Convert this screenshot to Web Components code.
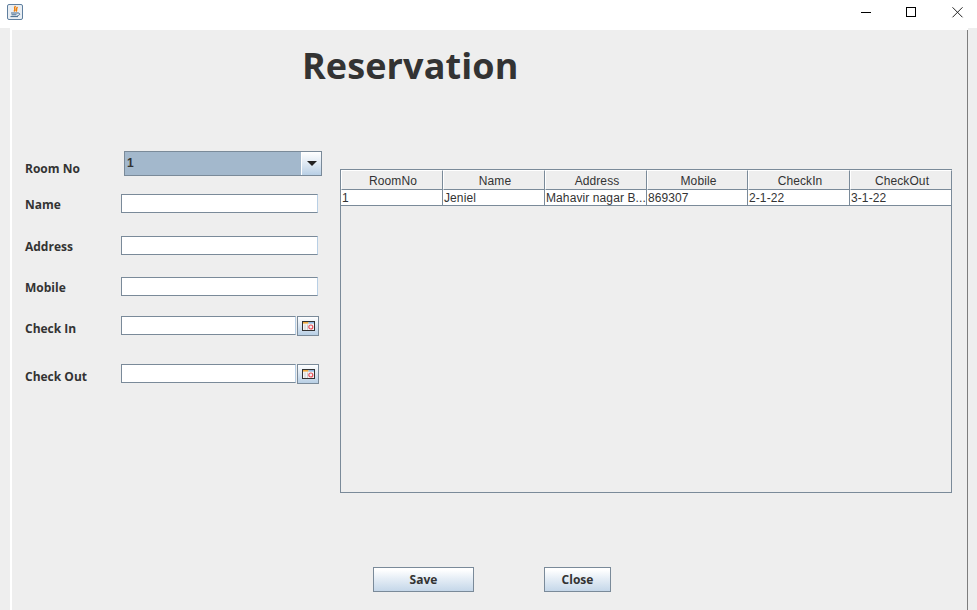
<!DOCTYPE html>
<html>
<head>
<meta charset="utf-8">
<title>Reservation</title>
<style>
  html, body { margin: 0; height: 100%; overflow: hidden; background: #eeeeee; }
  body { font-family: "Liberation Sans", Arial, sans-serif; color: #333; }
</style>
</head>
<body>
<app-window>
  <form-panel></form-panel>
  <data-table slot="table" columns="RoomNo,Name,Address,Mobile,CheckIn,CheckOut" row="1,Jeniel,Mahavir nagar B...,869307,2-1-22,3-1-22"></data-table>
  <metal-button slot="actions" width="101" style="margin-right:70px">Save</metal-button>
  <metal-button slot="actions" width="67">Close</metal-button>
</app-window>

<script>
// window frame: title bar, heading, form + table row, button row
class AppWindow extends HTMLElement {
  constructor() {
    super();
    this.attachShadow({ mode: "open" });
    this.shadowRoot.innerHTML = `
      <style>
        :host { display: flex; flex-direction: column; width: 977px; height: 610px; background: #fff; }
        .titlebar { display: flex; align-items: flex-start; height: 28px; background: #fff; flex: none; }
        .app-icon { margin: 4px 0 0 7px; width: 16px; height: 16px; }
        .win-btns { display: flex; margin-left: auto; }
        .win-btns svg { display: block; width: 46px; height: 24px; }
        .outer { flex: 1; display: flex; min-height: 0; }
        .strip { background: #eee; }
        .strip.left { width: 10px; }
        .strip.right { flex: 1; }
        .panel { width: 955px; margin-top: 2px; margin-left: 2px; border-right: 1px solid #7d7d7d; background: #eeeeee; display: flex; flex-direction: column; }
        h1 { margin: 14px 0 0 290px; height: 107px; font: bold 36px/43px "Open Sans", sans-serif; color: #333; letter-spacing: 0.1px; }
        .middle { display: flex; height: 402px; }
        .form { width: 328px; flex: none; }
        .table { width: 612px; padding-top: 18px; }
        .actions { display: flex; padding: 14px 0 0 361px; }
      </style>
      <div class="titlebar">
        <svg class="app-icon" viewBox="0 0 16 16">
          <rect x="0.5" y="0.5" width="15" height="15" rx="1.5" fill="#e9eef3" stroke="#5f7f9f"/>
          <path d="M8.5 2 C6 4.5 9.5 5 7 7.5 M10.5 3 C8.5 5 10.5 5.5 9 7.5" fill="none" stroke="#f07f09" stroke-width="1.5"/>
          <path d="M4 9 H10 M4.5 10.8 H9.5 M3.5 12.6 H11 M10 9 C13.5 8.5 13.5 11.5 10.5 11.5" fill="none" stroke="#44688c" stroke-width="1"/>
        </svg>
        <div class="win-btns">
          <svg viewBox="0 0 46 24"><path d="M22 12.5 H32" stroke="#000" fill="none"/></svg>
          <svg viewBox="0 0 46 24"><rect x="21.5" y="7.5" width="9" height="9" stroke="#000" stroke-width="1" fill="none"/></svg>
          <svg viewBox="0 0 46 24"><path d="M21.5 7.3 L31.5 17.3 M31.5 7.3 L21.5 17.3" stroke="#222" fill="none"/></svg>
        </div>
      </div>
      <div class="outer">
        <div class="strip left"></div>
        <div class="panel">
          <h1>Reservation</h1>
          <div class="middle">
            <div class="form"><slot></slot></div>
            <div class="table"><slot name="table"></slot></div>
          </div>
          <div class="actions"><slot name="actions"></slot></div>
        </div>
        <div class="strip right"></div>
      </div>`;
  }
}

// label + field on a fixed height row
class FieldRow extends HTMLElement {
  constructor() {
    super();
    this.attachShadow({ mode: "open" });
    this.shadowRoot.innerHTML = `
      <style>
        :host { display: flex; align-items: flex-start; padding-left: 13px; }
        .lbl { width: 96px; flex: none; font: bold 12px/15px "Open Sans", sans-serif; color: #333; }
        .fld { display: flex; gap: 1px; }
      </style>
      <div class="lbl" style="padding-top:${this.getAttribute("label-top") || 0}px">${this.getAttribute("label")}</div>
      <div class="fld"><slot></slot></div>`;
  }
}

class TextInput extends HTMLElement {
  constructor() {
    super();
    this.attachShadow({ mode: "open" });
    const w = this.getAttribute("width") || 197;
    this.shadowRoot.innerHTML = `
      <style>
        :host { display: block; width: ${w}px; height: 19px; box-sizing: border-box; background: #fff;
                border: 1px solid #7a8a99; border-right-color: #b8cfe5; }
      </style>`;
  }
}

class CalendarButton extends HTMLElement {
  constructor() {
    super();
    this.attachShadow({ mode: "open" });
    this.shadowRoot.innerHTML = `
      <style>
        :host { display: flex; align-items: center; justify-content: center; width: 22px; height: 20px; box-sizing: border-box;
                border: 1px solid #7a8a99; background: linear-gradient(#ffffff, #dfe9f3 45%, #b8cfe5); }
        svg { width: 13px; height: 10px; display: block; }
      </style>
      <svg viewBox="0 0 13 10">
        <rect x="0.5" y="0.5" width="12" height="9" fill="#f4f4f4" stroke="#333"/>
        <rect x="1" y="1" width="5.5" height="1.6" fill="#f0a93c"/>
        <rect x="6.5" y="1" width="5.5" height="1.6" fill="#8fb7e0"/>
        <path d="M3 3.5v5.5M5.5 3.5v5.5" stroke="#cfcfcf"/>
        <circle cx="8.8" cy="6" r="2" fill="none" stroke="#e8505b" stroke-width="1.2"/>
      </svg>`;
  }
}

class RoomCombo extends HTMLElement {
  constructor() {
    super();
    this.attachShadow({ mode: "open" });
    this.shadowRoot.innerHTML = `
      <style>
        :host { display: flex; width: 198px; height: 25px; box-sizing: border-box; border: 1px solid #7a8a99; margin-left: 3px; background: #fff; }
        .val { flex: 1; background: #a3b8cc; border-right: 1px solid #fff; font: bold 12px/22px "Liberation Sans", sans-serif; color: #333; padding-left: 2px; }
        .arrow { width: 19px; background: linear-gradient(#ffffff, #dfe9f3 50%, #b8cfe5); display: flex; align-items: center; justify-content: center; }
        .arrow i { width: 0; height: 0; border: 5px solid transparent; border-top: 5px solid #222; border-bottom: 0; }
      </style>
      <div class="val"><slot></slot></div>
      <div class="arrow"><i></i></div>`;
  }
}

class FormPanel extends HTMLElement {
  constructor() {
    super();
    this.attachShadow({ mode: "open" });
    this.shadowRoot.innerHTML = `
      <style>
        :host { display: block; }
        field-row { margin-bottom: var(--gap); }
      </style>
      <field-row label="Room No" label-top="10" style="--gap:18px"><room-combo>1</room-combo></field-row>
      <field-row label="Name" label-top="3" style="--gap:23px"><text-input></text-input></field-row>
      <field-row label="Address" label-top="3" style="--gap:22px"><text-input></text-input></field-row>
      <field-row label="Mobile" label-top="3" style="--gap:20px"><text-input></text-input></field-row>
      <field-row label="Check In" label-top="5" style="--gap:28px"><text-input width="175"></text-input><calendar-button></calendar-button></field-row>
      <field-row label="Check Out" label-top="5"><text-input width="175"></text-input><calendar-button></calendar-button></field-row>`;
  }
}

class DataTable extends HTMLElement {
  constructor() {
    super();
    this.attachShadow({ mode: "open" });
    const cols = this.getAttribute("columns").split(",");
    const row = this.getAttribute("row").split(",");
    this.shadowRoot.innerHTML = `
      <style>
        :host { display: block; width: 612px; height: 324px; box-sizing: border-box; border: 1px solid #7a8a99; background: #eee; font: 12px/16px "Liberation Sans", sans-serif; color: #333; letter-spacing: 0.1px; }
        .grid { display: grid; grid-template-columns: 102px 102px 102px 101px 102px 102px; }
        .h { height: 20px; line-height: 20px; box-sizing: border-box; text-align: center; padding-left: 2px; background: #eee; border-right: 1px solid #7a8a99; border-bottom: 1px solid #7a8a99; border-left: 1px solid #fff; border-top: 1px solid #fff; }
        .c { height: 16px; line-height: 17px; box-sizing: border-box; padding-left: 1px; background: #fff; white-space: nowrap; overflow: hidden; border-right: 1px solid #7a8a99; border-bottom: 1px solid #7a8a99; }
        .c:first-of-type { padding-left: 2px; }
      </style>
      <div class="grid">
        ${cols.map(c => `<div class="h">${c}</div>`).join("")}
        ${row.map(c => `<div class="c">${c}</div>`).join("")}
      </div>`;
  }
}

class MetalButton extends HTMLElement {
  constructor() {
    super();
    this.attachShadow({ mode: "open" });
    this.shadowRoot.innerHTML = `
      <style>
        :host { display: flex; align-items: center; justify-content: center; width: ${this.getAttribute("width")}px; height: 25px; box-sizing: border-box;
                border: 1px solid #7a8a99; background: linear-gradient(#ffffff 8%, #e6eef6 45%, #c5d7e9); font: bold 12px/15px "Open Sans", sans-serif; color: #333; }
      </style>
      <slot></slot>`;
  }
}

customElements.define("app-window", AppWindow);
customElements.define("field-row", FieldRow);
customElements.define("text-input", TextInput);
customElements.define("calendar-button", CalendarButton);
customElements.define("room-combo", RoomCombo);
customElements.define("form-panel", FormPanel);
customElements.define("data-table", DataTable);
customElements.define("metal-button", MetalButton);
</script>
</body>
</html>
